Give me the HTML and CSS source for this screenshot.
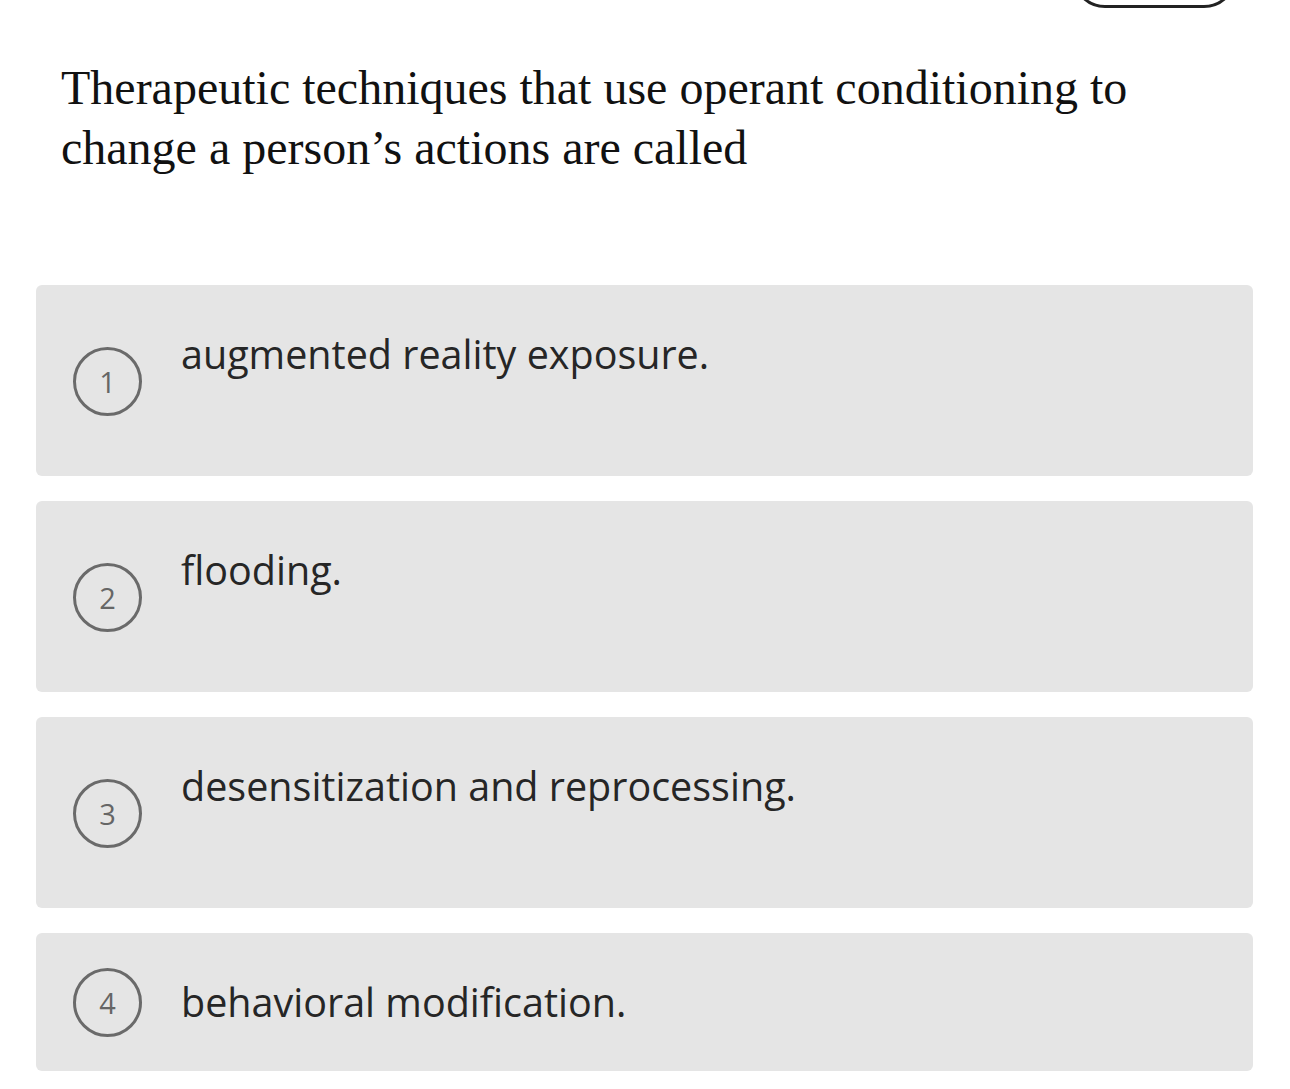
FILE: index.html
```html
<!DOCTYPE html>
<html lang="en">
<head>
<meta charset="utf-8">
<title>Question</title>
<link rel="stylesheet" href="styles.css">
</head>
<body>
<div class="page">
  <div class="topbar">
    <div class="pill"></div>
  </div>
  <h1 class="question">Therapeutic techniques that use operant conditioning to change a person’s actions are called</h1>
  <div class="options">
    <div class="option">
      <div class="num">1</div>
      <div class="opt-text tall">augmented reality exposure.</div>
    </div>
    <div class="option">
      <div class="num">2</div>
      <div class="opt-text tall">flooding.</div>
    </div>
    <div class="option">
      <div class="num">3</div>
      <div class="opt-text tall">desensitization and reprocessing.</div>
    </div>
    <div class="option">
      <div class="num">4</div>
      <div class="opt-text">behavioral modification.</div>
    </div>
  </div>
</div>
</body>
</html>
```

FILE: styles.css
```css
html, body {
  margin: 0;
  padding: 0;
  background: #ffffff;
}

.page {
  padding: 0 37px 0 36px;
}

.topbar {
  height: 8px;
  display: flex;
  justify-content: flex-end;
  padding-right: 16px;
}

.pill {
  width: 159px;
  height: 60px;
  margin-top: -58px;
  border: 3px solid #222222;
  border-radius: 33px;
  background: #ffffff;
}

.question {
  margin: 50px 0 0 25px;
  font-family: "Liberation Serif", "Times New Roman", serif;
  font-weight: normal;
  font-size: 48px;
  line-height: 60px;
  color: #111111;
  max-width: 1130px;
}

.options {
  margin-top: 107px;
  display: flex;
  flex-direction: column;
  gap: 25px;
}

.option {
  background: #e5e5e5;
  border-radius: 6px;
  display: flex;
  align-items: center;
  padding: 35px 37px 34px 37px;
}

.num {
  flex: 0 0 auto;
  width: 63px;
  height: 63px;
  border: 3px solid #6a6a6a;
  border-radius: 50%;
  display: flex;
  align-items: center;
  justify-content: center;
  font-family: "Open Sans", sans-serif;
  font-size: 29px;
  color: #666666;
  margin-right: 39px;
}

.opt-text {
  font-family: "Open Sans", sans-serif;
  font-size: 39.5px;
  line-height: 54px;
  color: #262626;
  align-self: flex-start;
  padding-top: 7px;
}

.opt-text.tall {
  min-height: 115px;
}
```
